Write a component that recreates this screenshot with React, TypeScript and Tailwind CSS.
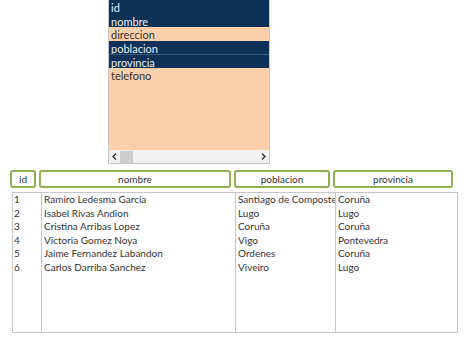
import React from "react";

const fields = [
  { name: "id", sel: true },
  { name: "nombre", sel: true },
  { name: "direccion", sel: false },
  { name: "poblacion", sel: true },
  { name: "provincia", sel: true },
  { name: "telefono", sel: false },
];

const rows = [
  ["1", "Ramiro Ledesma Garcia", "Santiago de Compostela", "Coruña"],
  ["2", "Isabel Rivas Andion", "Lugo", "Lugo"],
  ["3", "Cristina Arribas Lopez", "Coruña", "Coruña"],
  ["4", "Victoria Gomez Noya", "Vigo", "Pontevedra"],
  ["5", "Jaime Fernandez Labandon", "Ordenes", "Coruña"],
  ["6", "Carlos Darriba Sanchez", "Viveiro", "Lugo"],
];

const font = { fontFamily: "Lato, 'Open Sans', sans-serif" };

export default function App() {
  return (
    <div className="w-[474px] h-[341px] bg-white text-[11px] text-[#333]" style={font}>
      {/* listbox */}
      <div className="ml-[108px] w-[162px] h-[164px] border-x border-b border-[#c6c6c6] bg-[#fbcfaa] flex flex-col">
        <div className="flex-1 flex flex-col">
          {fields.map((f, i) => (
            <div
              key={f.name}
              className={
                "h-[13.6px] leading-[13.6px] pl-[2px] pt-[2px] " +
                (f.sel ? "bg-[#0e3158] text-[#e8eef5]" : "text-[#333]") +
                (i === 4 ? " border-t border-[#3a5878]" : "")
              }
              style={{ lineHeight: "11.6px" }}
            >
              {f.name}
            </div>
          ))}
        </div>
        <div className="h-[13px] bg-[#f0f0f0] flex items-center text-[#444]">
          <div className="w-[11px] flex justify-center">
            <svg width="5" height="7" viewBox="0 0 5 7"><path d="M4 0.5 L1 3.5 L4 6.5" fill="none" stroke="#333" strokeWidth="1.4" /></svg>
          </div>
          <div className="w-[13px] h-[12px] bg-[#cdcdcd]" />
          <div className="flex-1" />
          <div className="w-[12px] flex justify-center">
            <svg width="5" height="7" viewBox="0 0 5 7"><path d="M1 0.5 L4 3.5 L1 6.5" fill="none" stroke="#333" strokeWidth="1.4" /></svg>
          </div>
        </div>
      </div>

      {/* header buttons */}
      <div className="mt-[6px] ml-[10px] flex h-[18px] text-[10px]">
        <div className="w-[26px] border-2 border-[#8fb14f] rounded-[3px] flex items-center justify-center">id</div>
        <div className="ml-[3px] w-[192px] border-2 border-[#8fb14f] rounded-[3px] flex items-center justify-center">nombre</div>
        <div className="ml-[3px] w-[96px] border-2 border-[#8fb14f] rounded-[3px] flex items-center justify-center">poblacion</div>
        <div className="ml-[3px] w-[120px] border-2 border-[#8fb14f] rounded-[3px] flex items-center justify-center">provincia</div>
      </div>

      {/* table */}
      <div className="mt-[4px] ml-[12px] w-[446px] h-[141px] border border-[#c6c6c6] flex text-[10px]">
        {[0, 1, 2, 3].map((c) => (
          <div
            key={c}
            className={
              "h-full overflow-hidden whitespace-nowrap " +
              (c === 0
                ? "w-[28px] pl-[1px]"
                : c === 1
                ? "w-[194px] border-l border-[#c6c6c6] pl-[2px]"
                : c === 2
                ? "w-[100px] border-l border-[#c6c6c6] pl-[2px]"
                : "flex-1 border-l border-[#c6c6c6] pl-[2px]")
            }
          >
            {rows.map((r) => (
              <div key={r[0]} className="h-[13.5px] leading-[13.5px] overflow-hidden">
                {r[c]}
              </div>
            ))}
          </div>
        ))}
      </div>
    </div>
  );
}
